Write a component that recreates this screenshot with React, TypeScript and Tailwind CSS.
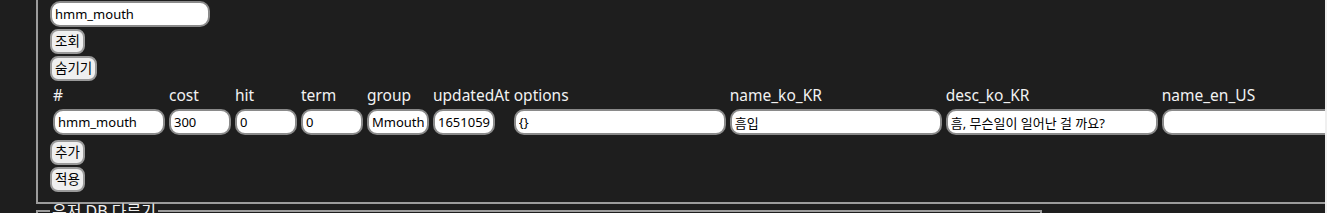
import React from "react";

const font = { fontFamily: '"Noto Sans", "Noto Sans CJK KR", sans-serif' };

const inputCls =
  "h-[26px] rounded-[10px] border-2 border-[#8a8a8a] bg-white px-[3px] text-[13px] text-black outline-none";
const btnCls =
  "h-[25px] rounded-[8px] border-2 border-[#9a9a9a] bg-[#efefef] px-[3px] text-[13.5px] leading-none text-black";

const cols: { label: string; value: string; w: string }[] = [
  { label: "#", value: "hmm_mouth", w: "w-[112px]" },
  { label: "cost", value: "300", w: "w-[62px]" },
  { label: "hit", value: "0", w: "w-[62px]" },
  { label: "term", value: "0", w: "w-[62px]" },
  { label: "group", value: "Mmouth", w: "w-[62px]" },
  { label: "updatedAt", value: "1651059542000", w: "w-[62px]" },
  { label: "options", value: "{}", w: "w-[212px]" },
  { label: "name_ko_KR", value: "흠입", w: "w-[212px]" },
  { label: "desc_ko_KR", value: "흠, 무슨일이 일어난 걸 까요?", w: "w-[212px]" },
  { label: "name_en_US", value: "", w: "w-[212px]" },
];

export default function App() {
  return (
    <div className="flex h-[213px] bg-[#f0f0f0]" style={font}>
      <div className="h-[213px] w-[1325px] overflow-hidden bg-[#1e1e1e] pl-[36px] text-[#f2f2f2]">
        <div className="w-max border-x-2 border-b-2 border-[#9c9c9c] px-[12px] pt-[1px] pb-[10px]">
          <div className="flex flex-col items-start gap-[2px]">
            <input className={`${inputCls} w-[160px]`} defaultValue="hmm_mouth" />
            <button className={btnCls}>조회</button>
            <button className={btnCls}>숨기기</button>
            <table className="border-separate border-spacing-[2px]">
              <thead>
                <tr>
                  {cols.map((c) => (
                    <th
                      key={c.label}
                      className="p-[1px] text-left text-[15.5px] font-normal leading-[19px]"
                    >
                      {c.label}
                    </th>
                  ))}
                </tr>
              </thead>
              <tbody>
                <tr>
                  {cols.map((c) => (
                    <td key={c.label} className="p-[1px]">
                      <input className={`${inputCls} ${c.w}`} defaultValue={c.value} />
                    </td>
                  ))}
                </tr>
              </tbody>
            </table>
            <button className={btnCls}>추가</button>
            <button className={btnCls}>적용</button>
          </div>
        </div>
        <fieldset className="w-[1006px] border-2 border-[#9c9c9c] px-[12px]">
          <legend className="px-[2px] text-[16px] leading-[14px]">유저 DB 다루기</legend>
          <div className="h-[40px]" />
        </fieldset>
      </div>
    </div>
  );
}
